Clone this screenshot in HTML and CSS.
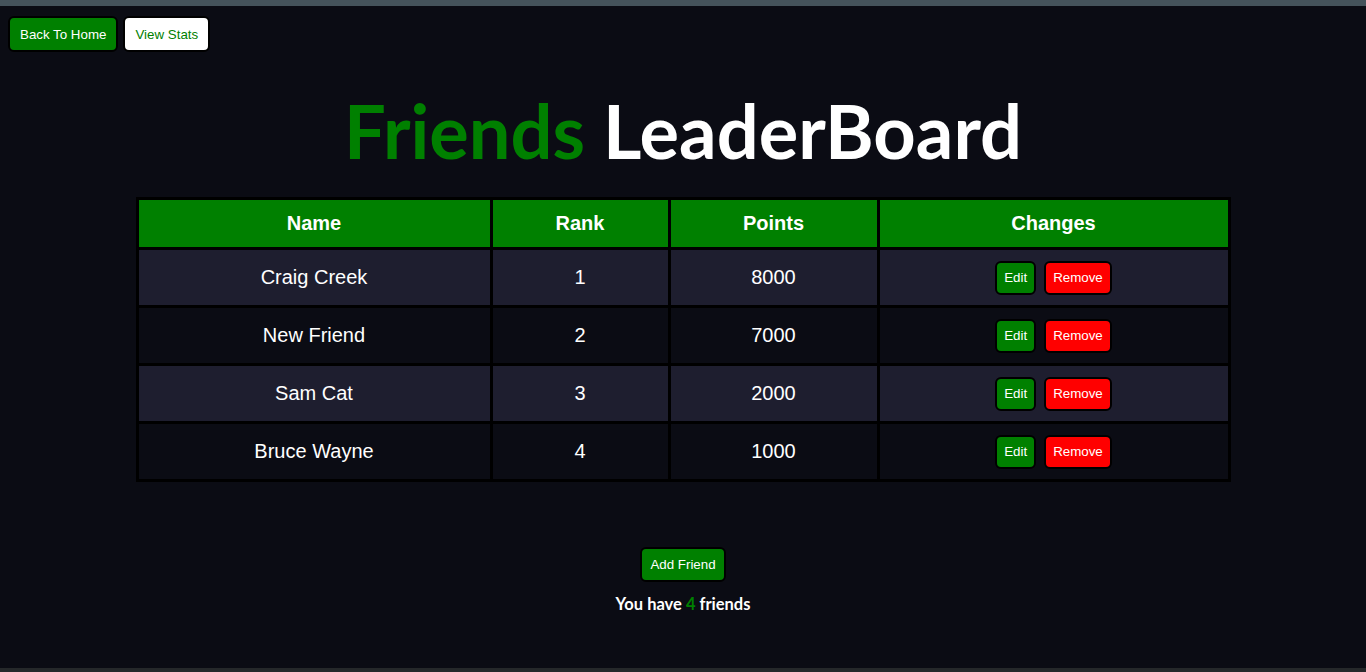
FILE: index.html
```html
<!DOCTYPE html>
<html lang="en">
<head>
<meta charset="utf-8">
<title>Friends LeaderBoard</title>
<link rel="stylesheet" href="styles.css">
</head>
<body>
<div class="topstrip"></div>
<nav class="nav">
  <button class="btn btn-green">Back To Home</button>
  <button class="btn btn-white">View Stats</button>
</nav>
<h1 class="title"><span class="green">Friends</span> LeaderBoard</h1>
<table class="board">
  <colgroup>
    <col class="c-name"><col class="c-rank"><col class="c-points"><col class="c-changes">
  </colgroup>
  <thead>
    <tr><th>Name</th><th>Rank</th><th>Points</th><th>Changes</th></tr>
  </thead>
  <tbody>
    <tr class="odd"><td>Craig Creek</td><td>1</td><td>8000</td><td><div class="actions"><button class="btn btn-sm btn-green">Edit</button><button class="btn btn-sm btn-red">Remove</button></div></td></tr>
    <tr><td>New Friend</td><td>2</td><td>7000</td><td><div class="actions"><button class="btn btn-sm btn-green">Edit</button><button class="btn btn-sm btn-red">Remove</button></div></td></tr>
    <tr class="odd"><td>Sam Cat</td><td>3</td><td>2000</td><td><div class="actions"><button class="btn btn-sm btn-green">Edit</button><button class="btn btn-sm btn-red">Remove</button></div></td></tr>
    <tr><td>Bruce Wayne</td><td>4</td><td>1000</td><td><div class="actions"><button class="btn btn-sm btn-green">Edit</button><button class="btn btn-sm btn-red">Remove</button></div></td></tr>
  </tbody>
</table>
<div class="footer">
  <button class="btn btn-green btn-add">Add Friend</button>
  <p class="count">You have <span class="green">4</span> friends</p>
</div>
<div class="bottomstrip"></div>
</body>
</html>
```
FILE: styles.css
```css
html, body {
  margin: 0;
  padding: 0;
  height: 100%;
}
body {
  background: #0b0c14;
  color: #ffffff;
  font-family: "Liberation Sans", Arial, sans-serif;
  display: flex;
  flex-direction: column;
  align-items: center;
}
.topstrip {
  align-self: stretch;
  height: 6px;
  background: #45535b;
}
.bottomstrip {
  align-self: stretch;
  height: 4px;
  margin-top: auto;
  background: #25282a;
}
.nav {
  align-self: stretch;
  display: flex;
  gap: 5px;
  padding: 10px 8px 0;
}
.btn {
  font-family: "Liberation Sans", Arial, sans-serif;
  font-size: 13.33px;
  border: 2px solid #000;
  border-radius: 6px;
  cursor: pointer;
  padding: 0 10px;
  height: 36px;
}
.btn-green { background: #008000; color: #fff; }
.btn-white { background: #fff; color: #008000; }
.btn-red { background: #ff0000; color: #fff; }
.btn-sm { height: 34px; padding: 0 7px; }
.green { color: #008000; }
.title {
  font-family: "Lato", "Noto Sans", sans-serif;
  font-weight: 700;
  font-size: 74px;
  margin: 42px 0 29px;
  line-height: 1;
}
.board {
  width: 1092px;
  border-collapse: collapse;
  table-layout: fixed;
  border: 2px solid #000;
}
.c-name { width: 354px; }
.c-rank { width: 178px; }
.c-points { width: 209px; }
.c-changes { width: 351px; }
.board th, .board td {
  border: 3px solid #000;
  text-align: center;
  font-size: 20px;
  padding: 0;
}
.board th {
  background: #008000;
  font-weight: 700;
  height: 47px;
}
.board td { height: 55px; }
.board tr.odd td { background: #1e1e2f; }
.actions {
  display: flex;
  justify-content: center;
  gap: 8px;
}
.footer {
  margin-top: 65px;
  display: flex;
  flex-direction: column;
  align-items: center;
}
.btn-add { height: 35px; padding: 0 8px; }
.count {
  font-family: "Lato", "Noto Sans", sans-serif;
  font-weight: 700;
  font-size: 16.5px;
  margin: 12px 0 0;
}
```
